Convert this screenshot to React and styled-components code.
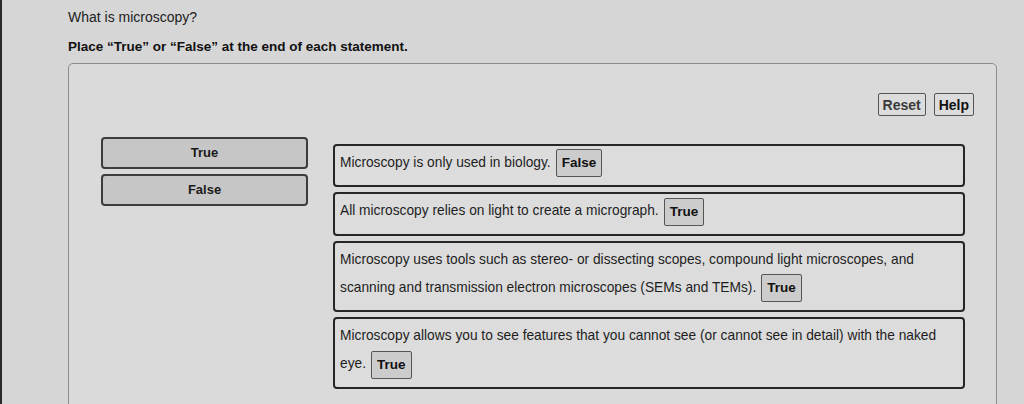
import React from "react";
import styled, { createGlobalStyle } from "styled-components";

const GlobalStyle = createGlobalStyle`
  html, body {
    margin: 0;
    padding: 0;
    background: #d6d6d6;
    font-family: "Liberation Sans", Arial, sans-serif;
    color: #1a1a1a;
    overflow: hidden;
  }
`;

const statements = [
  { text: "Microscopy is only used in biology.", answer: "False" },
  { text: "All microscopy relies on light to create a micrograph.", answer: "True" },
  {
    text:
      "Microscopy uses tools such as stereo- or dissecting scopes, compound light microscopes, and scanning and transmission electron microscopes (SEMs and TEMs).",
    answer: "True",
  },
  {
    text:
      "Microscopy allows you to see features that you cannot see (or cannot see in detail) with the naked eye.",
    answer: "True",
  },
];

const App = () => {
  return (
    <Page>
      <GlobalStyle />
      <Question>What is microscopy?</Question>
      <Instruction>Place “True” or “False” at the end of each statement.</Instruction>
      <Panel>
        <Toolbar>
          <ToolButton>Reset</ToolButton>
          <ToolButton strong>Help</ToolButton>
        </Toolbar>
        <Workspace>
          <Bank>
            <Token>True</Token>
            <Token>False</Token>
          </Bank>
          <Targets>
            {statements.map((s, i) => (
              <Statement key={i}>
                {s.text}
                <Chip>{s.answer}</Chip>
              </Statement>
            ))}
          </Targets>
        </Workspace>
      </Panel>
    </Page>
  );
};

export const Page = styled.div`
  height: 404px;
  box-sizing: border-box;
  padding: 8px 0 0 66px;
  border-left: 2px solid #2a2a2a;
`;

export const Question = styled.div`
  font-size: 14px;
  line-height: 18px;
  color: #222;
`;

export const Instruction = styled.div`
  font-size: 13.5px;
  font-weight: bold;
  line-height: 18px;
  margin-top: 12px;
  color: #111;
`;

export const Panel = styled.div`
  width: 929px;
  height: 360px;
  margin-top: 7px;
  box-sizing: border-box;
  border: 1px solid #8c8c8c;
  border-radius: 5px;
  background: #dadada;
  padding: 0 22px 0 32px;
`;

export const Toolbar = styled.div`
  display: flex;
  justify-content: flex-end;
  gap: 8px;
  margin-top: 29px;
`;

export const ToolButton = styled.button`
  font-family: "Liberation Sans", Arial, sans-serif;
  font-size: 14px;
  font-weight: bold;
  color: ${(p) => (p.strong ? "#111" : "#3a3a3a")};
  background: #dcdcdc;
  border: 1px solid #555;
  border-radius: 2px;
  height: 23px;
  padding: 0 4px;
  line-height: 20px;
`;

export const Workspace = styled.div`
  display: flex;
  gap: 25px;
  margin-top: 21px;
`;

export const Bank = styled.div`
  width: 207px;
  display: flex;
  flex-direction: column;
  gap: 5px;
`;

export const Token = styled.div`
  height: 32px;
  box-sizing: border-box;
  border: 2px solid #3c3c3c;
  border-radius: 4px;
  background: #c6c6c6;
  font-size: 13px;
  font-weight: bold;
  text-align: center;
  line-height: 28px;
  color: #1a1a1a;
`;

export const Targets = styled.div`
  width: 632px;
  display: flex;
  flex-direction: column;
  gap: 5px;
  margin-top: 7px;
`;

export const Statement = styled.div`
  box-sizing: border-box;
  border: 2px solid #262626;
  border-radius: 4px;
  background: #dcdcdc;
  padding: 3px 14px 8px 5px;
  font-size: 13.75px;
  line-height: 28px;
  color: #1e1e1e;
`;

export const Chip = styled.span`
  display: inline-block;
  vertical-align: middle;
  height: 28px;
  box-sizing: border-box;
  margin-left: 5px;
  padding: 0 5px;
  border: 1px solid #555;
  border-radius: 2px;
  background: #cccccc;
  font-weight: bold;
  font-size: 13.5px;
  line-height: 26px;
  color: #111;
`;

export default App;
